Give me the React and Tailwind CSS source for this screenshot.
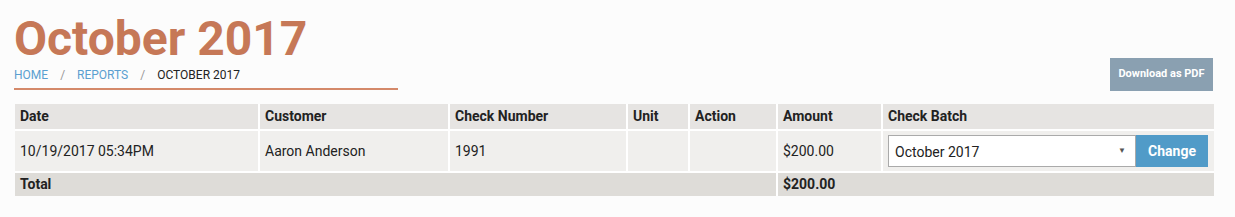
export default function App() {
    return (
        <div className="min-h-[217px] w-[1235px] bg-[#fcfcfc] font-['Roboto',sans-serif] text-[#222]">
            <div className="flex items-end justify-between pl-[14px] pr-[22px]">
                <div>
                    <h1 className="pt-[10px] text-[48px] font-bold leading-[58px] text-[#c67857]">October 2017</h1>
                    <div className="w-[384px] border-b-2 border-[#d4896a] pb-[6px] text-[12px] leading-[14px]">
                        <a href="#" className="text-[#5a9fd0]">HOME</a>
                        <span className="px-[12px] text-[#999]">/</span>
                        <a href="#" className="text-[#5a9fd0]">REPORTS</a>
                        <span className="px-[12px] text-[#999]">/</span>
                        <span>OCTOBER 2017</span>
                    </div>
                </div>
                <button className="mb-[-1px] h-[33px] w-[103px] bg-[#8aa0b1] text-[11px] font-bold text-white">Download as PDF</button>
            </div>

            <table className="ml-[15px] mt-[14px] w-[1199px] border-collapse text-left text-[14px]">
                <thead>
                    <tr className="h-[26px] bg-[#e6e4e2]">
                        <th className="w-[244px] border-r-2 border-b-2 border-white px-[5px] font-bold">Date</th>
                        <th className="w-[190px] border-r-2 border-b-2 border-white px-[5px] font-bold">Customer</th>
                        <th className="w-[178px] border-r-2 border-b-2 border-white px-[5px] font-bold">Check Number</th>
                        <th className="w-[62px] border-r-2 border-b-2 border-white px-[5px] font-bold">Unit</th>
                        <th className="w-[88px] border-r-2 border-b-2 border-white px-[5px] font-bold">Action</th>
                        <th className="w-[105px] border-r-2 border-b-2 border-white px-[5px] font-bold">Amount</th>
                        <th className="border-b-2 border-white px-[5px] font-bold">Check Batch</th>
                    </tr>
                </thead>
                <tbody>
                    <tr className="h-[42px] bg-[#f0efed]">
                        <td className="border-r-2 border-b-2 border-white px-[5px]">10/19/2017 05:34PM</td>
                        <td className="border-r-2 border-b-2 border-white px-[5px]">Aaron Anderson</td>
                        <td className="border-r-2 border-b-2 border-white px-[5px]">1991</td>
                        <td className="border-r-2 border-b-2 border-white px-[5px]"></td>
                        <td className="border-r-2 border-b-2 border-white px-[5px]"></td>
                        <td className="border-r-2 border-b-2 border-white px-[5px]">$200.00</td>
                        <td className="border-b-2 border-white px-[5px]">
                            <div className="flex h-[32px] w-[320px]">
                                <div className="flex flex-1 items-center justify-between border border-[#aaa] bg-white pl-[6px] pr-[9px]">
                                    <span className="pt-[2px]">October 2017</span>
                                    <span className="text-[8px] text-[#555]">▼</span>
                                </div>
                                <button className="w-[72px] bg-[#519bc8] font-bold text-white">Change</button>
                            </div>
                        </td>
                    </tr>
                    <tr className="h-[24px] bg-[#dedcd8] font-bold">
                        <td colSpan={5} className="border-r-2 border-white px-[5px]">Total</td>
                        <td className="px-[5px]">$200.00</td>
                        <td></td>
                    </tr>
                </tbody>
            </table>
        </div>
    );
}
